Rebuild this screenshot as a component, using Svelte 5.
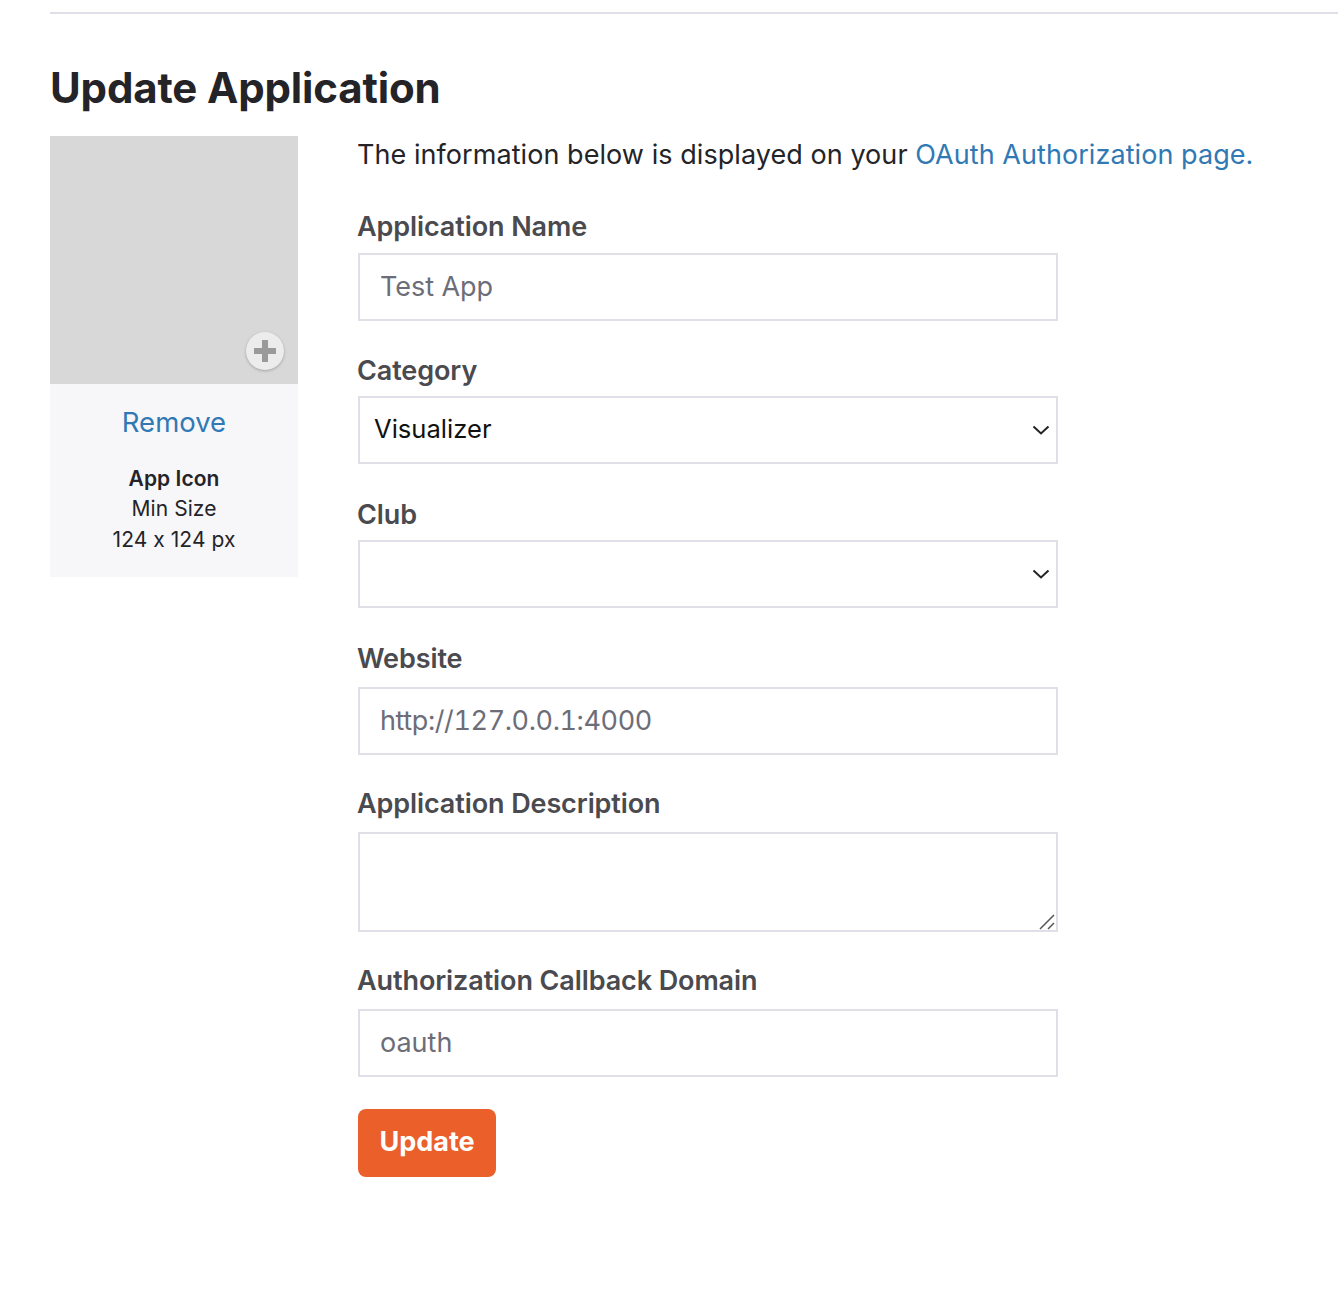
<script>
    let name = 'Test App';
    let category = 'Visualizer';
    let club = '';
    let website = 'http://127.0.0.1:4000';
    let description = '';
    let domain = 'oauth';
</script>

<div class="page">
    <hr />
    <h1>Update Application</h1>
    <div class="columns">
        <aside>
            <div class="icon">
                <span class="add">
                    <svg width="22" height="22" viewBox="0 0 22 22"><path d="M11 0v22M0 11h22" stroke="#9a9a9a" stroke-width="6" /></svg>
                </span>
            </div>
            <div class="meta">
                <a href="#remove" class="remove">Remove</a>
                <p><b>App Icon</b><br />Min Size<br />124 x 124 px</p>
            </div>
        </aside>
        <form on:submit|preventDefault>
            <p class="intro">The information below is displayed on your <a href="#oauth">OAuth Authorization page.</a></p>

            <label for="name">Application Name</label>
            <input id="name" class="first" type="text" bind:value={name} />

            <label for="category">Category</label>
            <div class="select">
                <select id="category" bind:value={category}>
                    <option>Visualizer</option>
                </select>
                <svg width="18" height="10" viewBox="0 0 18 10"><path d="M1.5 1.5 9 8.5l7.5-7" fill="none" stroke="#222" stroke-width="2" /></svg>
            </div>

            <label for="club">Club</label>
            <div class="select">
                <select id="club" bind:value={club}>
                    <option value=""></option>
                </select>
                <svg width="18" height="10" viewBox="0 0 18 10"><path d="M1.5 1.5 9 8.5l7.5-7" fill="none" stroke="#222" stroke-width="2" /></svg>
            </div>

            <label for="website" class="tall">Website</label>
            <input id="website" type="text" bind:value={website} />

            <label for="description" class="tall">Application Description</label>
            <div class="area">
                <textarea id="description" bind:value={description}></textarea>
                <svg width="18" height="18" viewBox="0 0 18 18"><path d="M2 16 16 2M10 16l6-6" fill="none" stroke="#555" stroke-width="1.5" /></svg>
            </div>

            <label for="domain" class="tall">Authorization Callback Domain</label>
            <input id="domain" type="text" bind:value={domain} />

            <button type="submit">Update</button>
        </form>
    </div>
</div>

<style>
    :global(body) {
        background: #fff;
        color: #242428;
        font-family: 'Inter', 'Liberation Sans', sans-serif;
        font-feature-settings: 'calt' 0;
    }

    .page {
        box-sizing: border-box;
        height: 1298px;
        padding: 12px 0 0 50px;
        overflow: hidden;
    }

    hr {
        border: 0;
        border-top: 2px solid #dfdfe8;
        margin: 0;
    }

    h1 {
        color: #242428;
        font-size: 42px;
        font-weight: 700;
        letter-spacing: -0.15px;
        line-height: 50px;
        margin: 49px 0 0;
    }

    .columns {
        display: flex;
        gap: 60px;
        margin-top: 23px;
    }

    aside {
        flex: 0 0 248px;
    }

    .icon {
        align-items: flex-end;
        background: #d8d8d8;
        box-sizing: border-box;
        display: flex;
        height: 248px;
        justify-content: flex-end;
        padding: 0 14px 14px 0;
    }

    .add {
        align-items: center;
        background: #ececec;
        border-radius: 50%;
        box-shadow: 0 1px 3px rgba(0, 0, 0, 0.25);
        display: flex;
        height: 38px;
        justify-content: center;
        width: 38px;
    }

    .meta {
        background: #f7f7fa;
        box-sizing: border-box;
        height: 193px;
        padding-top: 21px;
        text-align: center;
    }

    a {
        color: #3079b5;
        text-decoration: none;
    }

    .remove {
        display: block;
        font-size: 27.5px;
        line-height: 34px;
    }

    .meta p {
        font-size: 21px;
        letter-spacing: 0.05px;
        line-height: 30.5px;
        margin: 24.6px 0 0;
    }

    .meta b {
        font-weight: 600;
    }

    form {
        display: flex;
        flex: 0 0 700px;
        flex-direction: column;
        align-items: flex-start;
    }

    .intro {
        font-size: 27px;
        letter-spacing: 0.06px;
        line-height: 36px;
        margin: 1px 0 37px -1px;
        white-space: nowrap;
    }

    label {
        color: #4a4a4f;
        font-size: 27px;
        font-weight: 600;
        letter-spacing: -0.1px;
        line-height: 36px;
        margin-bottom: 8px;
        margin-left: -1px;
        margin-top: -1px;
    }

    label.tall {
        margin-bottom: 10px;
    }

    input,
    select,
    textarea {
        appearance: none;
        background: #fff;
        border: 2px solid #dfdfe8;
        border-radius: 0;
        box-sizing: border-box;
        font-family: inherit;
        font-feature-settings: 'calt' 0, 'tnum' 1;
        outline: none;
        width: 700px;
    }

    input {
        color: #6d6d78;
        font-size: 27px;
        height: 68px;
        margin-bottom: 32px;
        padding: 0 20px 2px;
    }

    input.first {
        margin-bottom: 33px;
    }

    #website {
        letter-spacing: -0.4px;
    }

    .select {
        margin-bottom: 34px;
        margin-top: -1px;
        position: relative;
    }

    select {
        color: #111;
        display: block;
        font-size: 25.6px;
        height: 68px;
        padding: 0 14px 4px;
    }

    .select svg {
        pointer-events: none;
        position: absolute;
        right: 8px;
        top: 29px;
    }

    .area {
        margin-bottom: 32px;
        position: relative;
    }

    textarea {
        display: block;
        height: 100px;
        resize: none;
    }

    .area svg {
        bottom: 1px;
        pointer-events: none;
        position: absolute;
        right: 2px;
    }

    button {
        background: #ea5f2a;
        border: 0;
        border-radius: 8px;
        color: #fff;
        font-family: inherit;
        font-size: 27px;
        font-weight: 700;
        height: 68px;
        margin-top: 0;
        padding: 0 0 4px;
        width: 138px;
    }
</style>
